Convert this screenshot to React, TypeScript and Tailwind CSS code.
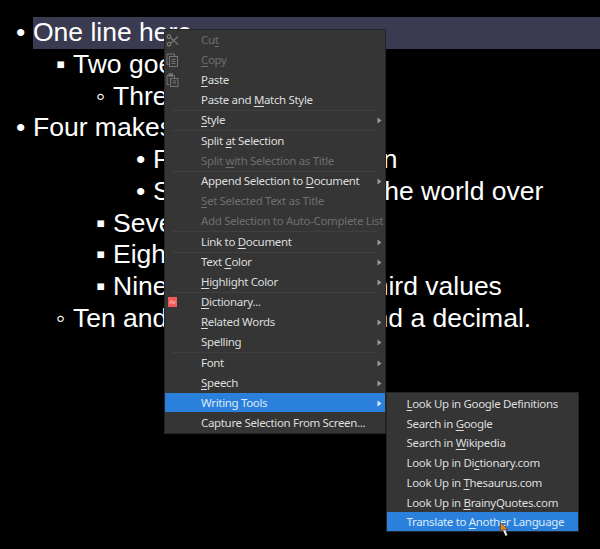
import React from 'react';

type Line = { marker: string; text: string; indent: string };

const lines: Line[] = [
  { marker: '•', text: 'One line here', indent: 'pl-[16px]' },
  { marker: '▪', text: 'Two goes here', indent: 'pl-[56px]' },
  { marker: '◦', text: 'Three follows', indent: 'pl-[96px]' },
  { marker: '•', text: 'Four makes it', indent: 'pl-[16px]' },
  { marker: '•', text: 'Five in a dollar again', indent: 'pl-[136px]' },
  { marker: '•', text: 'Six is here all over the world over', indent: 'pl-[136px]' },
  { marker: '▪', text: 'Seven', indent: 'pl-[96px]' },
  { marker: '▪', text: 'Eight', indent: 'pl-[96px]' },
  { marker: '▪', text: 'Nine has more of the third values', indent: 'pl-[96px]' },
  { marker: '◦', text: 'Ten and seven contains and a decimal.', indent: 'pl-[56px]' },
];

type Entry = {
  label?: React.ReactNode;
  off?: boolean;
  sub?: boolean;
  active?: boolean;
  icon?: React.ReactNode;
  sep?: 'flat' | 'tall';
};

const CutIcon = () => (
  <svg className="w-[13px] h-[13px]" viewBox="0 0 13 13" fill="none" stroke="#757575" strokeWidth="1.3">
    <circle cx="3" cy="2.8" r="1.8" />
    <circle cx="3" cy="10.2" r="1.8" />
    <path d="M4.5 3.8 L12 10.5 M4.5 9.2 L12 2.5" />
  </svg>
);

const CopyIcon = () => (
  <svg className="w-[13px] h-[14px]" viewBox="0 0 13 14" fill="none" stroke="#757575" strokeWidth="1">
    <path d="M2.5 11.5 H1 V1 H8.5 V3" />
    <rect x="3.5" y="3.5" width="8" height="10" />
    <path d="M5.5 6.5 H9.5 M5.5 8.5 H9.5 M5.5 10.5 H9.5" />
  </svg>
);

const PasteIcon = () => (
  <svg className="w-[13px] h-[14px]" viewBox="0 0 13 14" fill="none" stroke="#757575" strokeWidth="1">
    <path d="M3 11.5 H1 V2.5 H8.5 V5" />
    <rect x="3" y="0.8" width="3.5" height="2.4" fill="#757575" />
    <rect x="4.5" y="5.5" width="7.5" height="8" />
    <path d="M6.5 8 H10 M6.5 10 H10" />
  </svg>
);

const mainItems: Entry[] = [
  { label: <>Cu<u>t</u></>, off: true, icon: <CutIcon /> },
  { label: <><u>C</u>opy</>, off: true, icon: <CopyIcon /> },
  { label: <><u>P</u>aste</>, icon: <PasteIcon /> },
  { label: <>Paste and <u>M</u>atch Style</> },
  { sep: 'flat' },
  { label: <><u>S</u>tyle</>, sub: true },
  { sep: 'tall' },
  { label: <>Split <u>a</u>t Selection</> },
  { label: <>Split <u>w</u>ith Selection as Title</>, off: true },
  { sep: 'flat' },
  { label: <>Append Selection to <u>D</u>ocument</>, sub: true },
  { label: <><u>S</u>et Selected Text as Title</>, off: true },
  { label: 'Add Selection to Auto-Complete List', off: true },
  { sep: 'tall' },
  { label: <>Link to <u>D</u>ocument</>, sub: true },
  { sep: 'flat' },
  { label: <>Text <u>C</u>olor</>, sub: true },
  { label: <><u>H</u>ighlight Color</>, sub: true },
  { sep: 'flat' },
  {
    label: <><u>D</u>ictionary...</>,
    icon: (
      <span className="flex w-[9px] h-[10px] items-center justify-center bg-[#f05a5a] text-[6px] leading-none text-[#ffd0d0]">
        Az
      </span>
    ),
  },
  { label: <><u>R</u>elated Words</>, sub: true },
  { label: 'Spelling', sub: true },
  { sep: 'tall' },
  { label: 'Font', sub: true },
  { label: <><u>S</u>peech</>, sub: true },
  { label: 'Writing Tools', sub: true, active: true },
  { label: 'Capture Selection From Screen...' },
];

const subItems: Entry[] = [
  { label: <><u>L</u>ook Up in Google Definitions</> },
  { label: <>Search in <u>G</u>oogle</> },
  { label: <>Search in <u>W</u>ikipedia</> },
  { label: <>Look Up in Di<u>c</u>tionary.com</> },
  { label: <>Look Up in <u>T</u>hesaurus.com</> },
  { label: <>Look Up in <u>B</u>rainyQuotes.com</> },
  { label: <>Translate to <u>A</u>nother Language</>, active: true },
];

const MenuRow = ({ item, rowClass }: { item: Entry; rowClass: string }) => {
  if (item.sep) {
    return <div className={item.sep === 'flat' ? 'h-px -mb-px mx-[7px] bg-[#3f3f3f]' : 'h-px mx-[7px] bg-[#3f3f3f]'} />;
  }
  const tone = item.active ? 'bg-[#2b80dc] text-[#dcebfa]' : item.off ? 'text-[#6e6e6e]' : 'text-[#dedede]';
  return (
    <div className={`relative flex items-center whitespace-nowrap underline-offset-2 ${tone} ${rowClass}`}>
      {item.icon && <span className="absolute left-px flex w-[13px] justify-center">{item.icon}</span>}
      <span>{item.label}</span>
      {item.sub && (
        <svg className="absolute right-[3px] w-[5px] h-[7px]" viewBox="0 0 5 7">
          <path d="M0.5 0.5 L4.5 3.5 L0.5 6.5 Z" fill={item.active ? '#dcebfa' : '#9a9a9a'} />
        </svg>
      )}
    </div>
  );
};

export default function App() {
  return (
    <div className="relative w-[600px] h-[549px] overflow-hidden bg-black font-['Liberation_Sans',sans-serif] text-white">
      <div className="pt-[17px] text-[26.5px] leading-[31.75px]">
        {lines.map((line, i) => (
          <div key={i} className={`flex whitespace-nowrap ${line.indent}`}>
            <span className="w-[17px] shrink-0">{line.marker}</span>
            <span className={i === 0 ? 'grow bg-[#3a3a50]' : ''}>{line.text}</span>
          </div>
        ))}
      </div>

      <div className="absolute left-[164px] top-[29px] w-[222px] overflow-hidden border border-[#252525] bg-[#353535] font-['Noto_Sans',sans-serif] text-[11.5px] tracking-[-0.33px]">
        {mainItems.map((item, i) => (
          <MenuRow key={i} item={item} rowClass={item.active ? 'h-[19px] mb-px pt-px pl-9' : 'h-5 pl-9'} />
        ))}
      </div>

      <div className="absolute left-[386px] top-[392px] w-[193px] border border-[#252525] bg-[#353535] pt-[0.5px] font-['Noto_Sans',sans-serif] text-[11.5px] tracking-[-0.33px]">
        {subItems.map((item, i) => (
          <MenuRow key={i} item={item} rowClass={item.active ? 'h-[19px] pl-[19.5px]' : 'h-[19.8px] pl-[19.5px]'} />
        ))}
      </div>

      <svg className="absolute left-[500px] top-[522px] w-[9px] h-[14px]" viewBox="0 0 9 14">
        <path d="M4 8 L6.5 13.5" stroke="#f0f0f0" strokeWidth="2" />
        <path d="M0.5 0.5 L0.5 9.5 L3 7.8 L7.8 7.5 Z" fill="#e8821e" stroke="#5a3208" strokeWidth="0.6" />
      </svg>
    </div>
  );
}
